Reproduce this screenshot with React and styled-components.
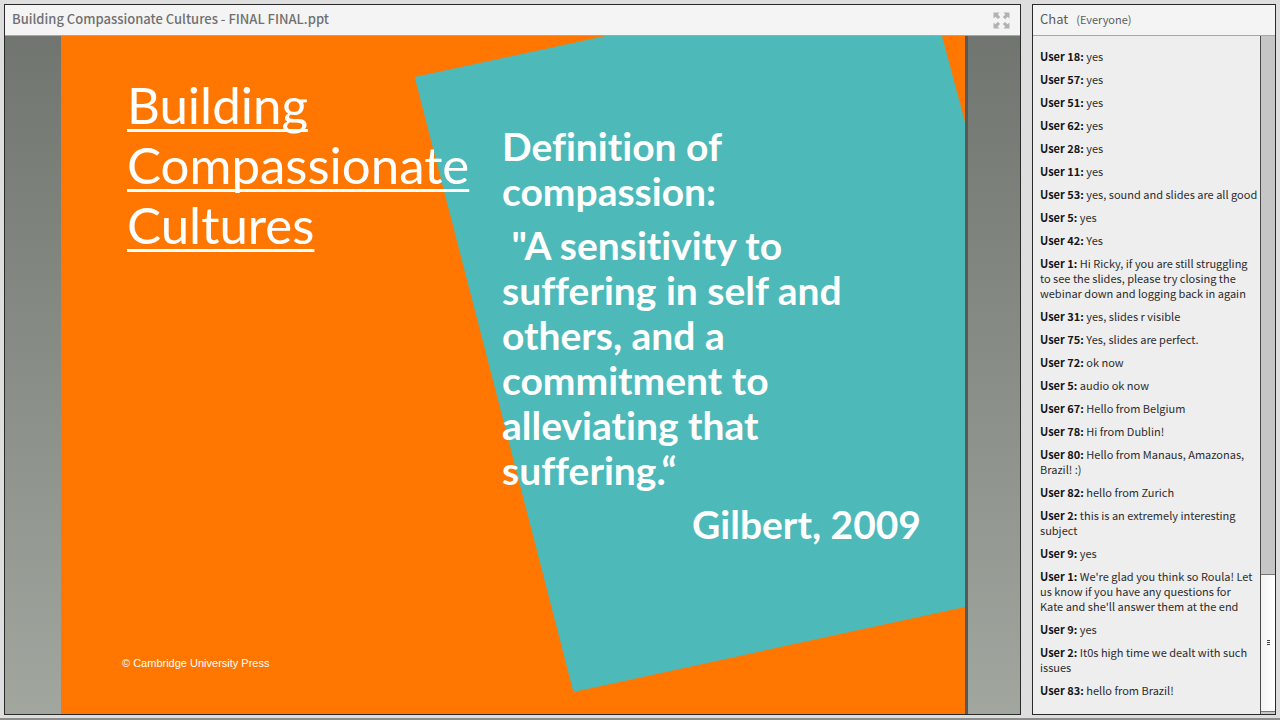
import React from "react";
import styled, { createGlobalStyle } from "styled-components";

const GlobalStyle = createGlobalStyle`
  *, *::before, *::after { box-sizing: border-box; }
  body { margin: 0; background: #dedede; }
`;

const uiFont = `"Noto Sans CJK SC", "Noto Sans", sans-serif`;

const Page = styled.div`
  min-height: 100vh;
  display: flex;
  gap: 11px;
  padding: 4px 4px 3px;
  border-bottom: 2px solid #8c8c8c;
  background: #dedede;
  font-family: ${uiFont};
`;

const Panel = styled.section`
  display: flex;
  flex-direction: column;
  min-width: 0;
  flex: ${(p) => (p.$width ? `0 0 ${p.$width}` : "1 1 0")};
  border: 1px solid #2a2a2a;
  background: #eeeeee;
`;

const PanelHeader = styled.header`
  display: flex;
  align-items: center;
  height: 31px;
  padding: 0 10px 2px 7px;
  border-bottom: 1px solid #a3a8a8;
  background: #f4f4f4;
  color: #5c5c5c;
`;

const PanelTitle = styled.h2`
  margin: 0;
  flex: ${(p) => (p.$grow ? 1 : "none")};
  font-size: 13px;
  line-height: 20px;
  font-weight: ${(p) => (p.$grow ? 500 : 400)};
  color: ${(p) => (p.$grow ? "#707070" : "inherit")};
  white-space: nowrap;
`;

const Audience = styled.span`
  margin-left: 8px;
  font-size: 11px;
  line-height: 20px;
`;

const IconButton = styled.button`
  display: flex;
  padding: 0;
  margin-top: 3px;
  border: 0;
  background: none;
  color: #b2b2b2;
`;

const Stage = styled.div`
  flex: 1;
  display: flex;
  padding: 0 52px 0 56px;
  background: linear-gradient(#70756f, #a1a69f);
`;

const Slide = styled.article`
  position: relative;
  flex: 1;
  display: flex;
  flex-direction: column;
  padding: 39px 44px 42px 61px;
  border-right: 3px solid #5a5853;
  background: #ff7700;
  color: #ffffff;
`;

const Backdrop = styled.svg`
  position: absolute;
  inset: 0;
  width: 100%;
  height: 100%;
`;

const SlideBody = styled.div`
  position: relative;
  flex: 1;
  display: grid;
  grid-template-columns: 375px 1fr;
  padding-left: 5px;
  font-family: Lato, Carlito, sans-serif;
  font-variant-ligatures: none;
`;

const SlideTitle = styled.h1`
  margin: 0;
  font-size: 51px;
  line-height: 60px;
  font-weight: 400;
  text-decoration: underline;
  text-decoration-thickness: 3px;
  text-underline-offset: 5px;
  text-decoration-skip-ink: none;
`;

const Quote = styled.div`
  display: flex;
  flex-direction: column;
  gap: 9px;
  padding-top: 49px;
  font-size: 39px;
  line-height: 45px;
  font-weight: 700;
  white-space: pre;
`;

const Paragraph = styled.p`
  margin: 0;
  text-align: ${(p) => (p.$end ? "right" : "left")};
`;

const Copyright = styled.footer`
  position: relative;
  font-family: "Liberation Sans", Arial, sans-serif;
  font-size: 11px;
  line-height: 18px;
`;

const ChatBody = styled.div`
  flex: 1;
  display: flex;
`;

const Messages = styled.ul`
  flex: 1;
  min-width: 0;
  display: flex;
  flex-direction: column;
  gap: 8px;
  margin: 0;
  padding: 13px 0 8px 7px;
  list-style: none;
  font-size: 11px;
  line-height: 15px;
  color: #2c2c2c;
  white-space: pre-line;
`;

const Author = styled.b`
  font-weight: 700;
  color: #161616;
`;

const ScrollTrack = styled.div`
  width: 15px;
  display: flex;
  flex-direction: column;
  justify-content: flex-end;
  padding-bottom: 2px;
  border-left: 1px solid #4a4a4a;
  background: #c6c6c6;
`;

const ScrollThumb = styled.div`
  height: 138px;
  display: flex;
  align-items: center;
  justify-content: center;
  border: solid #777777;
  border-width: 1px 0;
  background: linear-gradient(90deg, #f3f3f3, #ffffff);
`;

const MESSAGES = [
  ["User 18", "yes"],
  ["User 57", "yes"],
  ["User 51", "yes"],
  ["User 62", "yes"],
  ["User 28", "yes"],
  ["User 11", "yes"],
  ["User 53", "yes, sound and slides are all good"],
  ["User 5", "yes"],
  ["User 42", "Yes"],
  ["User 1", "Hi Ricky, if you are still struggling\nto see the slides, please try closing the\nwebinar down and logging back in again"],
  ["User 31", "yes, slides r visible"],
  ["User 75", "Yes, slides are perfect."],
  ["User 72", "ok now"],
  ["User 5", "audio ok now"],
  ["User 67", "Hello from Belgium"],
  ["User 78", "Hi from Dublin!"],
  ["User 80", "Hello from Manaus, Amazonas,\nBrazil! :)"],
  ["User 82", "hello from Zurich"],
  ["User 2", "this is an extremely interesting\nsubject"],
  ["User 9", "yes"],
  ["User 1", "We're glad you think so Roula! Let\nus know if you have any questions for\nKate and she'll answer them at the end"],
  ["User 9", "yes"],
  ["User 2", "It0s high time we dealt with such\nissues"],
  ["User 83", "hello from Brazil!"],
];

const ExpandIcon = () => (
  <svg width="17" height="17" viewBox="0 0 17 17" fill="currentColor" aria-hidden="true">
    {[0, 90, 180, 270].map((a) => (
      <path key={a} transform={`rotate(${a} 8.5 8.5)`} d="M0.5 0.5H6.5L4.8 2.4L7.2 4.9L5 7.1L2.5 4.7L0.5 6.5Z" />
    ))}
  </svg>
);

export default function App() {
  return (
    <>
      <GlobalStyle />
      <Page>
        <Panel>
          <PanelHeader>
            <PanelTitle $grow>Building Compassionate Cultures - FINAL FINAL.ppt</PanelTitle>
            <IconButton type="button" aria-label="Full screen">
              <ExpandIcon />
            </IconButton>
          </PanelHeader>
          <Stage>
            <Slide>
              <Backdrop viewBox="0 0 905 678" preserveAspectRatio="none" aria-hidden="true">
                <path d="M354 41L545 0H882L905 86V571L513 656Z" fill="#4db9b9" />
              </Backdrop>
              <SlideBody>
                <SlideTitle>
                  Building
                  <br />
                  Compassionate
                  <br />
                  Cultures
                </SlideTitle>
                <Quote>
                  <Paragraph>{"Definition of\ncompassion:"}</Paragraph>
                  <Paragraph>
                    {' "A sensitivity to\nsuffering in self and\nothers, and a\ncommitment to\nalleviating that\nsuffering.“'}
                  </Paragraph>
                  <Paragraph $end>Gilbert, 2009</Paragraph>
                </Quote>
              </SlideBody>
              <Copyright>© Cambridge University Press</Copyright>
            </Slide>
          </Stage>
        </Panel>
        <Panel $width="244px">
          <PanelHeader>
            <PanelTitle>Chat</PanelTitle>
            <Audience>(Everyone)</Audience>
          </PanelHeader>
          <ChatBody>
            <Messages>
              {MESSAGES.map(([name, text], i) => (
                <li key={i}>
                  <Author>{name}:</Author> {text}
                </li>
              ))}
            </Messages>
            <ScrollTrack>
              <ScrollThumb>
                <svg width="5" height="6" viewBox="0 0 5 6" stroke="#444444" aria-hidden="true">
                  <path d="M1 0.5H4M1 2.5H4M1 4.5H4" />
                </svg>
              </ScrollThumb>
            </ScrollTrack>
          </ChatBody>
        </Panel>
      </Page>
    </>
  );
}
